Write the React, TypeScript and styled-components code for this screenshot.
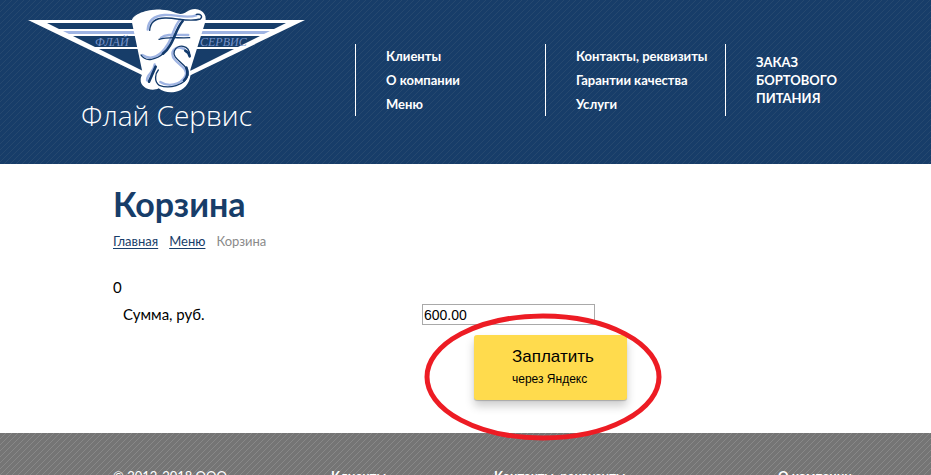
import React from "react";
import styled, { createGlobalStyle } from "styled-components";

const navy = "#173d69";
const lavender = "#9fb4e3";

const GlobalStyle = createGlobalStyle`
  * { box-sizing: border-box; }
  body {
    margin: 0;
    background: #fff;
    color: #000;
    font-family: Lato, "Open Sans", sans-serif;
    font-size: 15px;
    line-height: 20px;
  }
`;

const Page = styled.div`
  display: flex;
  flex-direction: column;
  min-height: 100vh;
`;

const Hatched = styled.div<{ $base: string; $line: string }>`
  background-color: ${(p) => p.$base};
  background-image: linear-gradient(
    135deg,
    transparent 46%,
    ${(p) => p.$line} 46%,
    ${(p) => p.$line} 54%,
    transparent 54%
  );
  background-size: 6px 6px;
`;

const Header = styled(Hatched)`
  display: flex;
  align-items: flex-start;
  gap: 50px;
  min-height: 164px;
  padding: 8px 28px 0;
`;

const Brand = styled.a`
  display: flex;
  flex: none;
  flex-direction: column;
  align-items: center;
  color: #fff;
  text-decoration: none;
`;

const BrandName = styled.span`
  font-family: "Open Sans", "Noto Sans", sans-serif;
  font-size: 28px;
  font-weight: 300;
  line-height: 38px;
`;

const Nav = styled.nav`
  display: flex;
  margin-top: 36px;
`;

const NavColumn = styled.div<{ $width: number }>`
  display: flex;
  flex: none;
  flex-direction: column;
  justify-content: center;
  width: ${(p) => p.$width}px;
  height: 72px;
  padding-left: 30px;
  border-left: 1px solid #fff;
`;

const NavLink = styled.a<{ $compact?: boolean }>`
  color: #fff;
  font-size: 13px;
  font-weight: 700;
  line-height: ${(p) => (p.$compact ? 18 : 24)}px;
  text-decoration: none;
`;

const Main = styled.main`
  padding: 18px 113px 33px;
`;

const Title = styled.h1`
  margin: 0;
  color: ${navy};
  font-size: 34px;
  font-weight: 700;
  line-height: 44px;
`;

const Crumbs = styled.nav`
  display: flex;
  gap: 11px;
  margin-top: 5px;
  color: #8a8a8a;
  font-size: 13px;
`;

const CrumbLink = styled.a`
  color: ${navy};
  text-underline-offset: 2px;
`;

const Count = styled.p`
  margin: 26px 0 7px;
`;

const Form = styled.form`
  display: grid;
  grid-template-columns: 299px 1fr;
  row-gap: 10px;
  padding-left: 10px;
`;

const Amount = styled.input`
  width: 173px;
  height: 21px;
  padding: 1px;
  border: 1px solid #a9a9a9;
  font: 14px "Liberation Sans", Arial, sans-serif;
`;

const PayArea = styled.div`
  position: relative;
  grid-column: 2;
  justify-self: start;
  margin-left: 52px;
`;

const PayButton = styled.button`
  display: flex;
  flex-direction: column;
  align-items: flex-start;
  justify-content: center;
  width: 153px;
  height: 65px;
  padding: 0 0 1px 38px;
  border: 0;
  border-radius: 3px;
  background: #ffdb4d;
  box-shadow: 0 6px 10px rgba(0, 0, 0, 0.2), 0 1px 1px rgba(0, 0, 0, 0.2);
  color: #000;
  font: 17px/24px "Liberation Sans", Arial, sans-serif;
`;

const PayNote = styled.span`
  font-size: 12px;
  line-height: 20px;
`;

const Marker = styled.svg`
  position: absolute;
  top: -22px;
  left: -50px;
  pointer-events: none;
`;

const Footer = styled(Hatched)`
  display: grid;
  flex: 1;
  grid-template-columns: 218px 163px 284px 1fr;
  padding: 33px 0 20px 113px;
  color: #fff;
  font-size: 13px;
`;

const FooterLink = styled.a`
  color: #fff;
  font-weight: 700;
  text-decoration: none;
`;

const Wing = () => (
  <>
    <path fill="#fff" d="M28 20H142L150 79L140 74Z" />
    <path fill={navy} d="M47 23H140V29H59ZM73 36H142V47H95ZM99 49H142L147 73Z" />
    <path fill={lavender} d="M63 31H140V34H69Z" />
  </>
);

const Monogram = () => (
  <g transform="translate(125 5) scale(.3333)" fill="none" strokeLinecap="round">
    <path
      fill="#fff"
      d="M20 48C24 26 70 12 110 14C136 14 148 24 166 27C182 27 190 12 210 12C236 13 250 34 238 60L196 194C200 216 190 243 168 255C144 266 118 264 101 250C80 262 46 248 47 225C46 215 54 209 52 200Z"
    />
    <g stroke={lavender} strokeWidth="7">
      <path d="M68 74C70 44 90 32 118 30C154 28 184 42 214 31M165 44C145 66 145 92 128 118C107 153 80 168 52 150M108 98C124 86 150 90 190 90M178 133C158 120 136 134 144 156C150 174 192 188 181 213C166 241 129 246 106 231M89 178C87 204 65 206 66 226" />
    </g>
    <g stroke="#123a6c">
      <path strokeWidth="4" d="M74 76C76 46 96 38 124 39C162 40 194 52 226 42C234 34 228 26 214 28M102 103C130 94 158 100 194 98M48 150C62 173 96 163 116 145M194 151C194 118 157 116 148 138C138 166 195 176 188 212C180 242 132 252 103 241C86 230 91 205 100 195" />
      <path strokeWidth="8" d="M173 48C155 69 150 96 135 121Q126 137 114 146M181 137Q192 142 194 154M184 188Q194 210 177 227M92 185L72 230" />
    </g>
  </g>
);

const WingText = styled.text`
  fill: #7893c9;
  font: italic 12px "Liberation Serif", serif;
`;

const Logo = () => (
  <svg width="277" height="88" viewBox="28 8 277 88" aria-hidden="true">
    <Wing />
    <g transform="translate(333 0) scale(-1 1)">
      <Wing />
    </g>
    <WingText x="95" y="46">ФЛАЙ</WingText>
    <WingText x="200" y="46">СЕРВИС</WingText>
    <Monogram />
  </svg>
);

export default function App() {
  return (
    <Page>
      <GlobalStyle />
      <Header as="header" $base={navy} $line="#25486f">
        <Brand href="#">
          <Logo />
          <BrandName>Флай Сервис</BrandName>
        </Brand>
        <Nav>
          <NavColumn $width={190}>
            <NavLink href="#">Клиенты</NavLink>
            <NavLink href="#">О компании</NavLink>
            <NavLink href="#">Меню</NavLink>
          </NavColumn>
          <NavColumn $width={180}>
            <NavLink href="#">Контакты, реквизиты</NavLink>
            <NavLink href="#">Гарантии качества</NavLink>
            <NavLink href="#">Услуги</NavLink>
          </NavColumn>
          <NavColumn $width={130}>
            <NavLink href="#" $compact>
              ЗАКАЗ БОРТОВОГО ПИТАНИЯ
            </NavLink>
          </NavColumn>
        </Nav>
      </Header>
      <Main>
        <Title>Корзина</Title>
        <Crumbs>
          <CrumbLink href="#">Главная</CrumbLink>
          <CrumbLink href="#">Меню</CrumbLink>
          <span>Корзина</span>
        </Crumbs>
        <Count>0</Count>
        <Form onSubmit={(e) => e.preventDefault()}>
          <label htmlFor="sum">Сумма, руб.</label>
          <Amount id="sum" defaultValue="600.00" />
          <PayArea>
            <PayButton type="submit">
              Заплатить
              <PayNote>через Яндекс</PayNote>
            </PayButton>
            <Marker width="238" height="128" aria-hidden="true">
              <ellipse cx="119" cy="64" rx="116" ry="61" fill="none" stroke="#ed1c24" strokeWidth="5" />
            </Marker>
          </PayArea>
        </Form>
      </Main>
      <Footer as="footer" $base="#757575" $line="#888888">
        <span>© 2012-2018 ООО</span>
        <FooterLink href="#">Клиенты</FooterLink>
        <FooterLink href="#">Контакты, реквизиты</FooterLink>
        <FooterLink href="#">О компании</FooterLink>
      </Footer>
    </Page>
  );
}
